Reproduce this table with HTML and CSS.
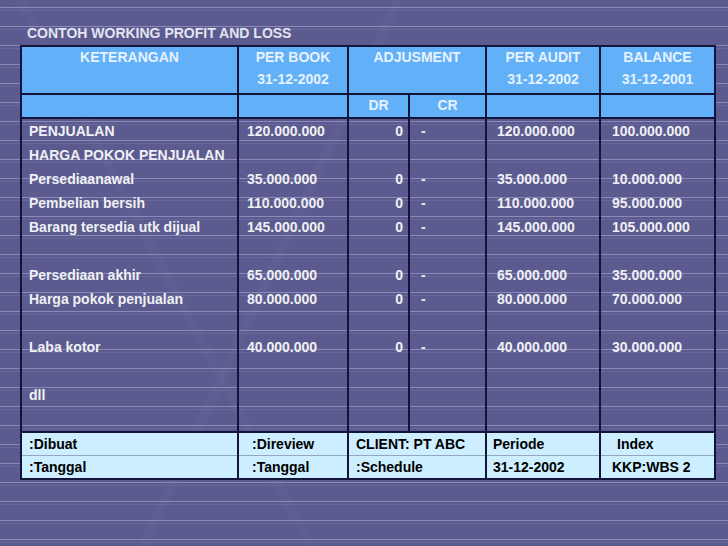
FILE: index.html
```html
<!DOCTYPE html>
<html>
<head>
<meta charset="utf-8">
<link rel="stylesheet" href="styles.css">
</head>
<body>
<div class="slide">
  <h1 class="title">CONTOH WORKING PROFIT AND LOSS</h1>
  <table class="wp">
    <colgroup>
      <col class="w-desc"><col class="w-book"><col class="w-dr"><col class="w-cr"><col class="w-audit"><col class="w-bal">
    </colgroup>
    <thead>
      <tr class="hr1">
        <th>KETERANGAN</th><th class="split">PER BOOK</th><th colspan="2">ADJUSMENT</th><th>PER AUDIT</th><th>BALANCE</th>
      </tr>
      <tr class="hr2">
        <th></th><th>31-12-2002</th><th colspan="2"></th><th>31-12-2002</th><th>31-12-2001</th>
      </tr>
      <tr class="hr3">
        <th></th><th></th><th>DR</th><th>CR</th><th></th><th></th>
      </tr>
    </thead>
    <tbody>
      <tr><td>PENJUALAN</td><td>120.000.000</td><td>0</td><td>-</td><td>120.000.000</td><td>100.000.000</td></tr>
      <tr><td>HARGA POKOK PENJUALAN</td><td></td><td></td><td></td><td></td><td></td></tr>
      <tr><td>Persediaanawal</td><td>35.000.000</td><td>0</td><td>-</td><td>35.000.000</td><td>10.000.000</td></tr>
      <tr><td>Pembelian bersih</td><td>110.000.000</td><td>0</td><td>-</td><td>110.000.000</td><td>95.000.000</td></tr>
      <tr><td>Barang tersedia utk dijual</td><td>145.000.000</td><td>0</td><td>-</td><td>145.000.000</td><td>105.000.000</td></tr>
      <tr><td></td><td></td><td></td><td></td><td></td><td></td></tr>
      <tr><td>Persediaan akhir</td><td>65.000.000</td><td>0</td><td>-</td><td>65.000.000</td><td>35.000.000</td></tr>
      <tr><td>Harga pokok penjualan</td><td>80.000.000</td><td>0</td><td>-</td><td>80.000.000</td><td>70.000.000</td></tr>
      <tr><td></td><td></td><td></td><td></td><td></td><td></td></tr>
      <tr><td>Laba kotor</td><td>40.000.000</td><td>0</td><td>-</td><td>40.000.000</td><td>30.000.000</td></tr>
      <tr><td></td><td></td><td></td><td></td><td></td><td></td></tr>
      <tr><td>dll</td><td></td><td></td><td></td><td></td><td></td></tr>
      <tr><td></td><td></td><td></td><td></td><td></td><td></td></tr>
    </tbody>
    <tfoot>
      <tr class="fr1"><td>:Dibuat</td><td class="f-review">:Direview</td><td colspan="2" class="f-client">CLIENT: PT ABC</td><td class="f-per">Periode</td><td class="f-idx">Index</td></tr>
      <tr class="fr2"><td>:Tanggal</td><td class="f-review">:Tanggal</td><td colspan="2" class="f-client">:Schedule</td><td class="f-per">31-12-2002</td><td class="f-kkp">KKP:WBS 2</td></tr>
    </tfoot>
  </table>
</div>
</body>
</html>
```

FILE: styles.css
```css
html, body {
  margin: 0;
  padding: 0;
}

body {
  width: 728px;
  height: 546px;
  overflow: hidden;
  font-family: "Liberation Sans", Arial, sans-serif;
  font-weight: bold;
  background-color: #5c5b8f;
  background-image:
    linear-gradient(115deg, transparent 0 40%, rgba(150,150,200,0.06) 40% 41%, transparent 41% 100%),
    linear-gradient(62deg, transparent 0 30%, rgba(150,150,200,0.05) 30% 31%, transparent 31% 100%),
    repeating-linear-gradient(to bottom, transparent 0 7px, rgba(185,185,230,0.5) 7px 8px, transparent 8px 10px, rgba(150,150,205,0.22) 10px 11px, transparent 11px 19px);
}

.slide {
  padding: 24px 0 0 20px;
}

.title {
  margin: 0;
  padding-left: 7px;
  height: 21px;
  font-size: 14px;
  line-height: 18px;
  color: #e4e4f0;
  font-weight: bold;
}

.wp {
  border-collapse: collapse;
  table-layout: fixed;
  width: 694px;
  font-size: 14px;
  color: #f0f0f4;
}

.w-desc { width: 217px; }
.w-book { width: 110px; }
.w-dr { width: 61px; }
.w-cr { width: 77px; }
.w-audit { width: 114px; }
.w-bal { width: 115px; }

.wp th, .wp td {
  height: 24px;
  padding: 0;
  white-space: nowrap;
  border-left: 2px solid #14143a;
  border-right: 2px solid #14143a;
}

.wp thead th {
  background: #62b0f8;
  color: #e6f2ff;
  font-weight: bold;
  text-align: center;
  line-height: 20px;
  vertical-align: top;
}

.wp thead tr.hr1 th { height: 22px; border-top: 2px solid #14143a; }
.wp thead tr.hr2 th { height: 24px; }
.wp thead tr.hr3 th { height: 22px; border-top: 2px solid #14143a; border-bottom: 2px solid #14143a; }

.wp tbody td {
  height: 24px;
  line-height: 24px;
}

.wp tbody td:nth-child(1) { padding-left: 7px; }
.wp tbody td:nth-child(2) { padding-left: 8px; }
.wp tbody td:nth-child(3) { text-align: right; padding-right: 5px; }
.wp tbody td:nth-child(4) { padding-left: 11px; }
.wp tbody td:nth-child(5) { padding-left: 10px; }
.wp tbody td:nth-child(6) { padding-left: 11px; }

.wp tfoot td {
  background: #cdeeff;
  color: #000;
  height: 22px;
  line-height: 22px;
  padding-left: 7px;
}

.wp tfoot tr.fr1 td { border-top: 2px solid #14143a; border-bottom: 1px solid #93a8c0; }
.wp tfoot tr.fr2 td { border-bottom: 2px solid #14143a; }

.wp tfoot td.f-review { padding-left: 13px; }
.wp tfoot td.f-client { padding-left: 7px; }
.wp tfoot td.f-per { padding-left: 6px; }
.wp tfoot td.f-idx { padding-left: 16px; }
.wp tfoot td.f-kkp { padding-left: 11px; }
```
